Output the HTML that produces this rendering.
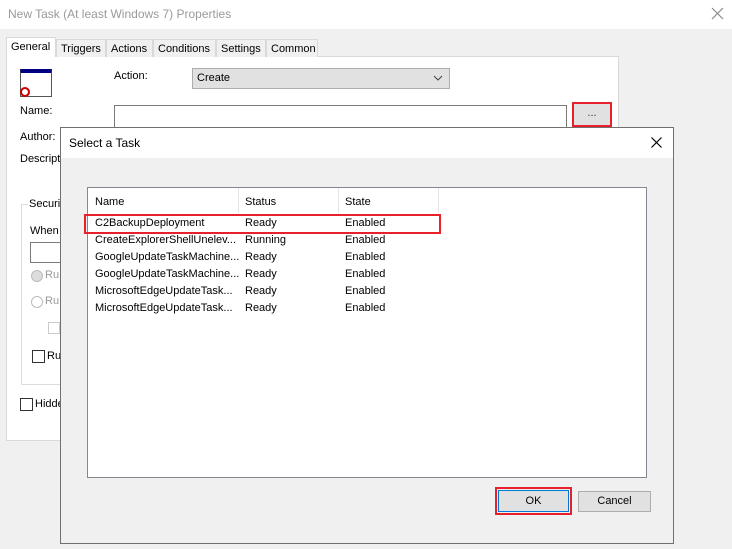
<!DOCTYPE html>
<html><head><style>
*{box-sizing:border-box;margin:0;padding:0}
body{width:732px;height:549px;background:#f0f0f0;position:relative;overflow:hidden;font-family:"Liberation Sans",sans-serif;font-size:11px;color:#000}
.a{position:absolute}
.tab{position:absolute;top:39px;height:18px;border:1px solid #d9d9d9;border-bottom:none;background:#f0f0f0;padding:3px 4px 0;font-size:11px}
.row{position:absolute;left:95px;height:17px;line-height:17px;font-size:11px}
</style></head><body>
<div class="a" style="left:0;top:0;width:732px;height:29px;background:#fff"></div>
<div class="a" style="left:8px;top:7px;color:#9a9a9a;font-size:12px">New Task (At least Windows 7) Properties</div>
<svg class="a" style="left:711px;top:7px" width="13" height="13"><path d="M1 1L12 12M12 1L1 12" stroke="#888" stroke-width="1.2"/></svg>
<div class="a" style="left:6px;top:56px;width:613px;height:385px;background:#fff;border:1px solid #d9d9d9"></div>
<div class="tab" style="left:56px;width:50px">Triggers</div>
<div class="tab" style="left:106px;width:47px">Actions</div>
<div class="tab" style="left:153px;width:63px">Conditions</div>
<div class="tab" style="left:216px;width:50px">Settings</div>
<div class="tab" style="left:266px;width:52px">Common</div>
<div class="tab" style="left:6px;top:37px;height:20px;width:50px;background:#fff;border-color:#d9d9d9">General</div>
<div class="a" style="left:20px;top:69px;width:32px;height:28px;border:1px solid #555;background:#fff;border-top:4px solid #000080"></div>
<div class="a" style="left:20px;top:87px;width:10px;height:10px;border:2px solid #c00;border-radius:50%;background:#fff"></div>
<div class="a" style="left:114px;top:70px">Action:</div>
<div class="a" style="left:192px;top:68px;width:258px;height:21px;background:#e1e1e1;border:1px solid #adadad;padding:3px 4px">Create<svg style="position:absolute;right:6px;top:6px" width="10" height="6"><path d="M1 1L5 5L9 1" stroke="#444" fill="none"/></svg></div>
<div class="a" style="left:20px;top:105px">Name:</div>
<div class="a" style="left:114px;top:105px;width:453px;height:25px;border:1px solid #7a7a7a;background:#fff"></div>
<div class="a" style="left:572px;top:102px;width:40px;height:25px;border:2px solid #e8202a;background:#e1e1e1;text-align:center;color:#333;line-height:19px">...</div>
<div class="a" style="left:20px;top:131px">Author:</div>
<div class="a" style="left:20px;top:153px">Descripti</div>
<div class="a" style="left:21px;top:204px;width:50px;height:181px;border:1px solid #dcdcdc"></div>
<div class="a" style="left:28px;top:198px;background:#fff;padding:0 1px">Securit</div>
<div class="a" style="left:30px;top:225px">When</div>
<div class="a" style="left:30px;top:242px;width:40px;height:21px;border:1px solid #7a7a7a"></div>
<div class="a" style="left:31px;top:270px;width:12px;height:12px;border:1px solid #bbb;border-radius:50%;background:#ddd"></div>
<div class="a" style="left:45px;top:269px;color:#999">Ru</div>
<div class="a" style="left:31px;top:296px;width:12px;height:12px;border:1px solid #bbb;border-radius:50%"></div>
<div class="a" style="left:45px;top:295px;color:#999">Ru</div>
<div class="a" style="left:48px;top:322px;width:12px;height:12px;border:1px solid #ccc"></div>
<div class="a" style="left:32px;top:350px;width:13px;height:13px;border:1px solid #333"></div>
<div class="a" style="left:47px;top:350px">Ru</div>
<div class="a" style="left:20px;top:398px;width:13px;height:13px;border:1px solid #333"></div>
<div class="a" style="left:35px;top:398px">Hidde</div>

<div class="a" style="left:60px;top:127px;width:614px;height:417px;background:#f0f0f0;border:1px solid #707070"></div>
<div class="a" style="left:61px;top:128px;width:612px;height:30px;background:#fff"></div>
<div class="a" style="left:69px;top:136px;font-size:12px">Select a Task</div>
<svg class="a" style="left:651px;top:137px" width="11" height="11"><path d="M0.5 0.5L10.5 10.5M10.5 0.5L0.5 10.5" stroke="#000" stroke-width="1.2"/></svg>
<div class="a" style="left:87px;top:187px;width:560px;height:291px;background:#fff;border:1px solid #828790"></div>
<div class="a" style="left:238px;top:188px;width:1px;height:25px;background:#e5e5e5"></div>
<div class="a" style="left:338px;top:188px;width:1px;height:25px;background:#e5e5e5"></div>
<div class="a" style="left:438px;top:188px;width:1px;height:25px;background:#e5e5e5"></div>
<div class="a" style="left:95px;top:196px">Name</div>
<div class="a" style="left:245px;top:196px">Status</div>
<div class="a" style="left:345px;top:196px">State</div>
<div class="row" style="top:215px">C2BackupDeployment</div><div class="row" style="top:215px;left:245px">Ready</div><div class="row" style="top:215px;left:345px">Enabled</div>
<div class="row" style="top:232px">CreateExplorerShellUnelev...</div><div class="row" style="top:232px;left:245px">Running</div><div class="row" style="top:232px;left:345px">Enabled</div>
<div class="row" style="top:249px">GoogleUpdateTaskMachine...</div><div class="row" style="top:249px;left:245px">Ready</div><div class="row" style="top:249px;left:345px">Enabled</div>
<div class="row" style="top:266px">GoogleUpdateTaskMachine...</div><div class="row" style="top:266px;left:245px">Ready</div><div class="row" style="top:266px;left:345px">Enabled</div>
<div class="row" style="top:283px">MicrosoftEdgeUpdateTask...</div><div class="row" style="top:283px;left:245px">Ready</div><div class="row" style="top:283px;left:345px">Enabled</div>
<div class="row" style="top:300px">MicrosoftEdgeUpdateTask...</div><div class="row" style="top:300px;left:245px">Ready</div><div class="row" style="top:300px;left:345px">Enabled</div>
<div class="a" style="left:84px;top:214px;width:357px;height:20px;border:2px solid #e8202a"></div>
<div class="a" style="left:495px;top:487px;width:77px;height:28px;border:2px solid #e8202a"></div>
<div class="a" style="left:498px;top:490px;width:71px;height:22px;border:1px solid #0078d7;background:#e1e1e1;text-align:center;line-height:20px">OK</div>
<div class="a" style="left:578px;top:491px;width:73px;height:21px;border:1px solid #adadad;background:#e1e1e1;text-align:center;line-height:19px">Cancel</div>
</body></html>
